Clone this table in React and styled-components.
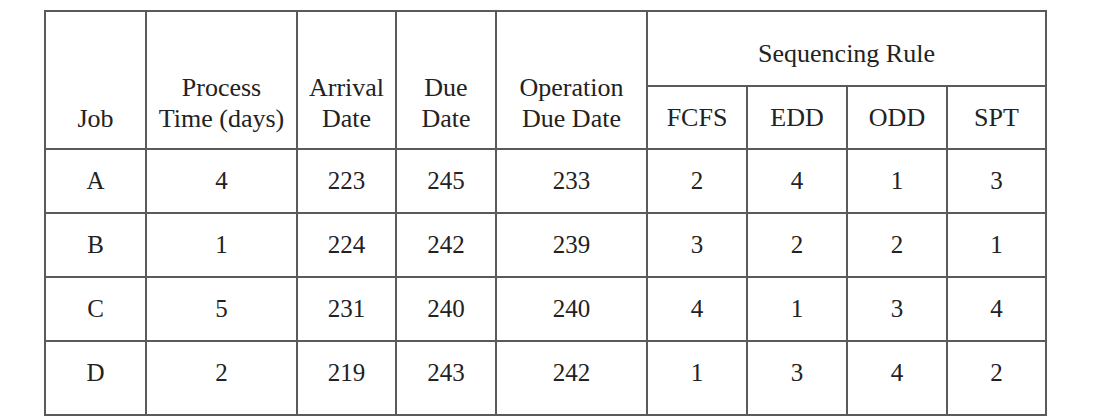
import React from "react";
import styled, { createGlobalStyle } from "styled-components";

const GlobalStyle = createGlobalStyle`
  html, body {
    margin: 0;
    padding: 0;
    background: #ffffff;
  }
`;

const columns = [101, 151, 99, 100, 151, 100, 100, 100, 99];

const rules = ["FCFS", "EDD", "ODD", "SPT"];

const jobs = [
  { job: "A", process: 4, arrival: 223, due: 245, opDue: 233, seq: [2, 4, 1, 3] },
  { job: "B", process: 1, arrival: 224, due: 242, opDue: 239, seq: [3, 2, 2, 1] },
  { job: "C", process: 5, arrival: 231, due: 240, opDue: 240, seq: [4, 1, 3, 4] },
  { job: "D", process: 2, arrival: 219, due: 243, opDue: 242, seq: [1, 3, 4, 2] },
];

const App = () => {
  return (
    <Page>
      <GlobalStyle />
      <Table>
        <colgroup>
          {columns.map((w, i) => (
            <col key={i} style={{ width: w }} />
          ))}
        </colgroup>
        <thead>
          <TopRow>
            <HeadCell rowSpan={2}>Job</HeadCell>
            <HeadCell rowSpan={2}>
              Process
              <br />
              Time (days)
            </HeadCell>
            <HeadCell rowSpan={2}>
              Arrival
              <br />
              Date
            </HeadCell>
            <HeadCell rowSpan={2}>
              Due
              <br />
              Date
            </HeadCell>
            <HeadCell rowSpan={2}>
              Operation
              <br />
              Due Date
            </HeadCell>
            <GroupCell colSpan={4}>Sequencing Rule</GroupCell>
          </TopRow>
          <SubRow>
            {rules.map((r) => (
              <RuleCell key={r}>{r}</RuleCell>
            ))}
          </SubRow>
        </thead>
        <tbody>
          {jobs.map((j, i) => (
            <BodyRow key={j.job} last={i === jobs.length - 1}>
              <Cell>{j.job}</Cell>
              <Cell>{j.process}</Cell>
              <Cell>{j.arrival}</Cell>
              <Cell>{j.due}</Cell>
              <Cell>{j.opDue}</Cell>
              {j.seq.map((s, k) => (
                <Cell key={k}>{s}</Cell>
              ))}
            </BodyRow>
          ))}
        </tbody>
      </Table>
    </Page>
  );
};

export default App;

const Page = styled.div`
  padding: 10px 0 0 44px;
  font-family: "Liberation Serif", "Times New Roman", serif;
  color: #222222;
`;

const Table = styled.table`
  border-collapse: collapse;
  table-layout: fixed;
  width: 1001px;
  font-size: 25px;
`;

const TopRow = styled.tr`
  height: 75px;
`;

const SubRow = styled.tr`
  height: 63px;
`;

const HeadCell = styled.th`
  font-weight: 400;
  font-size: 26px;
  border: 2px solid #5a5a5a;
  padding: 0 0 14px;
  vertical-align: bottom;
  line-height: 31px;
  text-align: center;
`;

const GroupCell = styled.th`
  font-weight: 400;
  font-size: 26px;
  border: 2px solid #5a5a5a;
  padding: 10px 0 0;
  text-align: center;
  vertical-align: middle;
`;

const RuleCell = styled.th`
  font-weight: 400;
  font-size: 26px;
  border: 2px solid #5a5a5a;
  padding: 0;
  text-align: center;
  vertical-align: middle;
`;

const BodyRow = styled.tr`
  height: ${(p) => (p.last ? "74px" : "64px")};
  td {
    padding-bottom: ${(p) => (p.last ? "10px" : "0")};
  }
`;

const Cell = styled.td`
  border: 2px solid #5a5a5a;
  text-align: center;
  vertical-align: middle;
  padding: 0;
  line-height: 30px;
`;
